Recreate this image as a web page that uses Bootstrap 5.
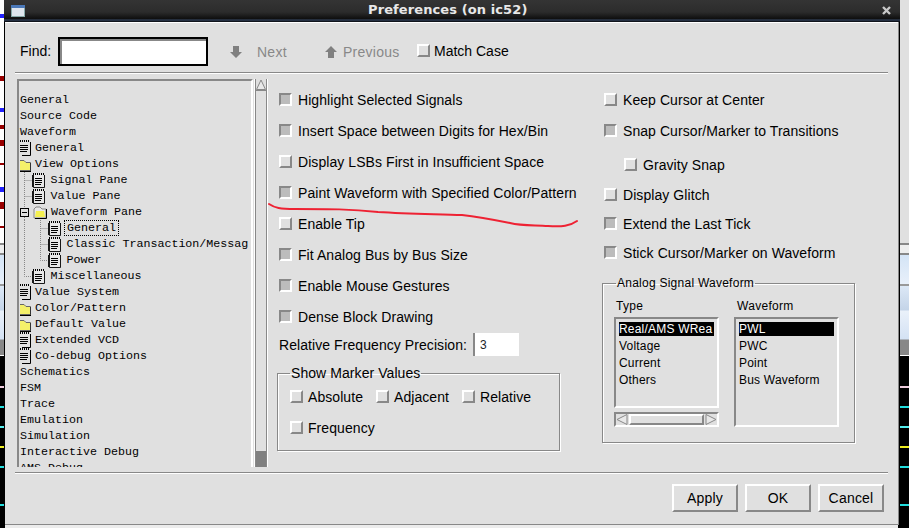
<!DOCTYPE html>
<html lang="en">
<head>
<meta charset="utf-8">
<title>Preferences (on ic52)</title>
<link href="https://cdn.jsdelivr.net/npm/bootstrap@5.3.0/dist/css/bootstrap.min.css" rel="stylesheet">
<style>
html,body{margin:0;height:528px;overflow:hidden;background:#000}
body{font-family:"Liberation Sans",Arial,sans-serif;font-size:14px;color:#000;line-height:16px}
.xdesk{width:909px;height:528px;position:relative}
.xstrip-l{width:4px;background:linear-gradient(180deg,#fff 0,#fff 14px,#22f 14px,#22f 18px,#fff 18px,#fff 76px,#900 76px,#900 81px,#fff 81px,#fff 108px,#22f 108px,#22f 112px,#fff 112px,#fff 125px,#900 125px,#900 129px,#fff 129px,#fff 140px,#900 140px,#900 146px,#fff 146px,#fff 163px,#900 163px,#900 165px,#fff 165px,#fff 187px,#22f 187px,#22f 192px,#fff 192px,#fff 202px,#900 202px,#900 209px,#fff 209px,#fff 226px,#900 226px,#900 228px,#fff 228px,#fff 243px,#888 243px,#888 245px,#eee 245px,#eee 253px,#888 253px,#888 255px,#d4e4f6 255px,#e8f0fa 284px,#999 284px,#999 286px,#dce8f6 286px,#c4d4e8 310px,#eaf1fa 311px,#d4e2f4 339px,#888 340px,#888 355px,#fff 355px,#fff 356px,#000 356px,#000 386px,#ecd 386px,#ecd 388px,#000 388px,#000 406px,#2dd 406px,#2dd 408px,#000 408px,#000 426px,#5ee 426px,#5ee 428px,#000 428px,#000 446px,#ee2 446px,#ee2 448px,#000 448px,#000 466px,#2dd 466px,#2dd 468px,#000 468px,#000 504px,#2dd 504px,#2dd 506px,#000 506px)}
.xstrip-r{width:9px;background:linear-gradient(180deg,#e0e0e0 0,#e0e0e0 243px,#888 243px,#888 245px,#eee 245px,#eee 253px,#888 253px,#888 255px,#d4e4f6 255px,#e8f0fa 284px,#999 284px,#999 286px,#dce8f6 286px,#c4d4e8 310px,#eaf1fa 311px,#d4e2f4 339px,#888 340px,#888 355px,#fff 355px,#fff 356px,#000 356px,#000 386px,#ecd 386px,#ecd 388px,#000 388px,#000 406px,#2dd 406px,#2dd 408px,#000 408px,#000 426px,#5ee 426px,#5ee 428px,#000 428px,#000 446px,#ee2 446px,#ee2 448px,#000 448px,#000 466px,#2dd 466px,#2dd 468px,#000 468px,#000 504px,#2dd 504px,#2dd 506px,#000 506px)}
.xwin{width:896px;height:528px;background:#000}
.xtitle{height:22px;background:linear-gradient(180deg,#343434 0,#2c2c2c 12px,#0e0e0e 19px,#3b4d6a 20px,#10141c 21px);color:#e8e8e8;padding-left:7px;padding-right:9px}
.xtitle-text{font-family:"DejaVu Sans",sans-serif;font-weight:700;font-size:13px;margin-left:343px;margin-top:-3px;letter-spacing:.1px}
.xclose{margin-left:auto;margin-top:-2px}
.xbody{width:894px;height:503px;margin-left:1px;background:#e0e0e0;border-right:1px solid #888;border-bottom:1px solid #888;box-shadow:inset 0 1px 0 #fff}
.xbelow{width:893px;height:3px;margin-left:1px;background:#ececec}
.xfind{height:44px;padding:15px 0 0 15px}
.xfind-label{width:38px;margin-top:-2px}
.xinput.form-control{width:150px;height:29px;border:2px solid #000;border-radius:0;background:#fff;box-shadow:inset 2px 2px 0 #888;padding:0 4px}
.xmuted{color:#888;letter-spacing:.25px}
.xnext{margin-left:22px;width:95px;gap:15px}
.xprev{width:92px;gap:6px}
.xmatch{gap:4px;margin-top:-2px}
.xck{appearance:none;-webkit-appearance:none;display:block;flex:none;width:13px;height:13px;margin:0;background:#e0e0e0;border:2px solid;border-color:#fff #888 #888 #fff}
.xck:checked{background:#bcbcbc;border-color:#888 #fff #fff #888}
.xrule{opacity:1;margin:0 0 0 10px;width:873px;border:0;height:2px;border-top:1px solid #888;border-bottom:1px solid #fff}
.xfind + .xrule{margin-top:6px}
.xmain{height:393px;margin-top:5px;padding-left:12px;padding-bottom:0}
.xtree{width:236px;height:388px;overflow:hidden;border:2px solid;border-color:#888 #fff #fff #888;border-bottom:0;padding-top:11px;padding-left:1px;font-family:"Liberation Mono","Courier New",monospace;font-size:11.67px;white-space:nowrap;background:#e0e0e0}
.xnode{height:16px;line-height:16px}
.xnode svg{flex:none;display:block}
.xfocus{outline:1px dotted #000;outline-offset:0;padding:0 2px;line-height:14px}
.xvbar{width:12px;height:388px;margin-left:2px;border-left:1px solid #888;border-right:1px solid #888;box-shadow:-1px 0 0 #fff,1px 0 0 #fff}
.xvthumb{height:16px;background:#808080}
.xcol1{width:325px;margin-left:10px;padding-top:5px;letter-spacing:.07px}
.xrow{height:31px;padding-left:2px;gap:6px}
.xprec{height:23px;margin-top:1px;padding-left:2px}
.xprec-in.form-control{width:46px;height:23px;margin-left:6px;border:0;border-left:2px solid #888;border-radius:0;background:#fff;padding:0 0 0 5px;font-size:12px;line-height:20px;box-shadow:none}
.xset{display:block;margin-top:9px;width:283px;height:86px;border:1px solid #888;box-shadow:1px 1px 0 #fff,inset 1px 1px 0 #fff;padding:0 0 0 12px}
.xset legend{float:none;width:auto;margin:0;padding:0 1px;font-size:14px;line-height:16px}
.xitem{width:86px;gap:5px;height:31px}
.xcol2{width:260px;padding-top:5px;letter-spacing:.07px}
.xrow2{height:31px;padding-left:2px;gap:6px}
.xrow2s{height:29px}
.xgrav{margin-top:3px;padding-left:22px}
.xset2{width:253px;height:168px;margin-top:8px;padding:0 0 0 11px;font-size:12px}
.xset2 legend{font-size:12px;margin-left:2px;letter-spacing:.25px}
.xhead{height:26px;padding-top:7px;padding-left:2px;letter-spacing:.3px}
.xhead2{padding-left:3px}
.xlistcol{width:105px;margin-right:15px}
.xlist{width:105px;height:91px;border:2px solid;border-color:#888 #fff #fff #888;padding:3px;overflow:hidden;font-size:12px;letter-spacing:.2px;white-space:nowrap}
.xlist2{height:110px}
.xlist li{height:14px;line-height:14px;margin-bottom:3px;overflow:hidden}
.xlist li.xsel{background:#000;color:#fff}
.xhbar{width:105px;height:15px;margin-top:4px;border:2px solid;border-color:#888 #fff #fff #888;overflow:hidden}
.xhthumb{flex:1;height:11px;margin:0 1px;border:2px solid;border-color:#fff #888 #888 #fff}
.xfoot{padding:10px 14px 0 0;gap:7px;width:893px}
.xbtn.btn{width:66px;height:28px;padding:0;border:2px solid;border-color:#fff #888 #888 #fff;border-radius:0;background:#e0e0e0;color:#000;font-size:14px;line-height:22px;letter-spacing:.2px}
.xink{position:absolute;left:0;top:0;pointer-events:none}
</style>
</head>
<body>
<svg width="0" height="0" class="position-absolute">
<defs>
<symbol id="doc" viewBox="0 0 13 15">
<path d="M1 1.5H12V14.5H1Z" fill="#e8e8e8"/>
<path d="M1 .5H12M1 1.5H12" stroke="#000" stroke-dasharray="1 1" fill="none"/>
<path d="M12.5 2V14.5H1.5V2M.5 2V14" stroke="#000" fill="none" stroke-width=".9"/>
<path d="M3 5.5H10M3 7.5H10M3 9.5H10M3 11.5H9" stroke="#000" fill="none"/>
</symbol>
<symbol id="doc0" viewBox="0 0 11 16">
<path d="M0 1.5H10M0 .5H9" stroke="#000" stroke-dasharray="1 1" fill="none"/>
<path d="M10.5 2V15.5H2" stroke="#000" fill="none"/>
<path d="M0 5.5H8M0 7.5H8M0 9.5H8M0 11.5H7" stroke="#000" fill="none"/>
</symbol>
<symbol id="fold" viewBox="0 0 11 15">
<path d="M0 3.5H4L6 5.5H10.5V13.5H0" fill="#f4f06a" stroke="#666"/>
<path d="M11 6V14.5H0" stroke="#000" fill="none"/>
</symbol>
<symbol id="foldo" viewBox="0 0 15 13">
<path d="M2 3L4 1H8L10 3H14V12H2Z" fill="#e8e8e8" stroke="#888"/>
<path d="M4 5H12L13 11H3Z" fill="#f4f050"/>
<path d="M14.5 3V12.5H3" stroke="#000" fill="none"/>
</symbol>
<symbol id="con1" viewBox="0 0 12 16"><path d="M4.5 0V16M4.5 8.5H12" stroke="#888" stroke-dasharray="1 1" fill="none"/></symbol>
<symbol id="con1e" viewBox="0 0 12 16"><path d="M4.5 0V8.5H12" stroke="#888" stroke-dasharray="1 1" fill="none"/></symbol>
</defs>
</svg>
<div class="xdesk d-flex">
<div class="xstrip-l"></div>
<div class="xwin d-flex flex-column">
<div class="xtitle d-flex align-items-center">
<svg width="14" height="12" viewBox="0 0 14 12"><rect x=".5" y=".5" width="13" height="11" fill="#dfe6ee" stroke="#8aa"/><rect x="0" y="0" width="14" height="3" fill="#4a78b8"/></svg>
<span class="xtitle-text">Preferences (on ic52)</span>
<svg class="xclose" width="9" height="9" viewBox="0 0 9 9"><path d="M1 1L8 8M8 1L1 8" stroke="#c8c8c8" stroke-width="2.4"/></svg>
</div>
<div class="xbody">
<div class="xfind d-flex align-items-center">
<label class="xfind-label" for="findbox">Find:</label>
<input id="findbox" class="xinput form-control" type="text">
<span class="xnext xmuted d-flex align-items-center">
<svg width="12" height="12" viewBox="0 0 12 12"><path d="M3 0H9V6H12L6 12L0 6H3Z" fill="#808080"/></svg>Next</span>
<span class="xprev xmuted d-flex align-items-center">
<svg width="12" height="12" viewBox="0 0 12 12"><path d="M6 0L12 6H9V12H3V6H0Z" fill="#808080"/></svg>Previous</span>
<span class="xmatch d-flex align-items-center"><input class="xck" type="checkbox" aria-label="Match Case">Match Case</span>
</div>
<hr class="xrule">
<div class="xmain d-flex">
<div class="xtree">
<div class="xnode">General</div>
<div class="xnode">Source Code</div>
<div class="xnode">Waveform</div>
<div class="xnode d-flex align-items-center gap-1"><svg width="11" height="16"><use href="#doc0"/></svg>General</div>
<div class="xnode d-flex align-items-center gap-1"><svg width="11" height="15"><use href="#fold"/></svg>View Options</div>
<div class="xnode d-flex align-items-center"><svg width="12" height="16"><use href="#con1"/></svg><svg width="13" height="15" class="me-1"><use href="#doc"/></svg>&#8202;&#8202;Signal Pane</div>
<div class="xnode d-flex align-items-center"><svg width="12" height="16"><use href="#con1"/></svg><svg width="13" height="15" class="me-1"><use href="#doc"/></svg>&#8202;&#8202;Value Pane</div>
<div class="xnode d-flex align-items-center"><svg width="12" height="16" viewBox="0 0 12 16"><path d="M4.5 0V4M4.5 13V16" stroke="#888" stroke-dasharray="1 1"/><rect x=".5" y="4.5" width="8" height="8" fill="#e0e0e0" stroke="#000"/><path d="M2 8.5H7" stroke="#000"/></svg><svg width="15" height="13"><use href="#foldo"/></svg><span class="ms-1">Waveform Pane</span></div>
<div class="xnode d-flex align-items-center"><svg width="12" height="16"><path d="M4.5 0V16" stroke="#888" stroke-dasharray="1 1"/></svg><svg width="16" height="16"><use href="#con1" width="12" height="16" x="4"/></svg><svg width="13" height="15"><use href="#doc"/></svg><span class="xfocus ms-1">General</span></div>
<div class="xnode d-flex align-items-center"><svg width="12" height="16"><path d="M4.5 0V16" stroke="#888" stroke-dasharray="1 1"/></svg><svg width="16" height="16"><use href="#con1" width="12" height="16" x="4"/></svg><svg width="13" height="15"><use href="#doc"/></svg><span class="ms-1">&#8202;&#8202;Classic Transaction/Messag</span></div>
<div class="xnode d-flex align-items-center"><svg width="12" height="16"><path d="M4.5 0V16" stroke="#888" stroke-dasharray="1 1"/></svg><svg width="16" height="16"><use href="#con1e" width="12" height="16" x="4"/></svg><svg width="13" height="15"><use href="#doc"/></svg><span class="ms-1">&#8202;&#8202;Power</span></div>
<div class="xnode d-flex align-items-center"><svg width="12" height="16"><use href="#con1e"/></svg><svg width="13" height="15" class="me-1"><use href="#doc"/></svg>&#8202;&#8202;Miscellaneous</div>
<div class="xnode d-flex align-items-center gap-1"><svg width="11" height="16"><use href="#doc0"/></svg>Value System</div>
<div class="xnode d-flex align-items-center gap-1"><svg width="11" height="15"><use href="#fold"/></svg>Color/Pattern</div>
<div class="xnode d-flex align-items-center gap-1"><svg width="11" height="15"><use href="#fold"/></svg>Default Value</div>
<div class="xnode d-flex align-items-center gap-1"><svg width="11" height="16"><use href="#doc0"/></svg>Extended VCD</div>
<div class="xnode d-flex align-items-center gap-1"><svg width="11" height="16"><use href="#doc0"/></svg>Co-debug Options</div>
<div class="xnode">Schematics</div>
<div class="xnode">FSM</div>
<div class="xnode">Trace</div>
<div class="xnode">Emulation</div>
<div class="xnode">Simulation</div>
<div class="xnode">Interactive Debug</div>
<div class="xnode">AMS Debug</div>
</div>
<div class="xvbar d-flex flex-column justify-content-between">
<svg width="10" height="12" viewBox="0 0 10 12"><path d="M5 1L9.5 10.5H.5Z" fill="#e8e8e8" stroke="#888"/><path d="M0 11.5H10" stroke="#888"/></svg>
<div class="xvthumb"></div>
</div>
<div class="xcol1">
<div class="xrow d-flex align-items-center"><input class="xck" type="checkbox" checked aria-label="Highlight Selected Signals">Highlight Selected Signals</div>
<div class="xrow d-flex align-items-center"><input class="xck" type="checkbox" checked aria-label="Insert Space">Insert Space between Digits for Hex/Bin</div>
<div class="xrow d-flex align-items-center"><input class="xck" type="checkbox" aria-label="Display LSBs">Display LSBs First in Insufficient Space</div>
<div class="xrow d-flex align-items-center"><input class="xck" type="checkbox" checked aria-label="Paint Waveform">Paint Waveform with Specified Color/Pattern</div>
<div class="xrow d-flex align-items-center"><input class="xck" type="checkbox" aria-label="Enable Tip">Enable Tip</div>
<div class="xrow d-flex align-items-center"><input class="xck" type="checkbox" checked aria-label="Fit Analog Bus">Fit Analog Bus by Bus Size</div>
<div class="xrow d-flex align-items-center"><input class="xck" type="checkbox" checked aria-label="Enable Mouse Gestures">Enable Mouse Gestures</div>
<div class="xrow d-flex align-items-center"><input class="xck" type="checkbox" checked aria-label="Dense Block Drawing">Dense Block Drawing</div>
<div class="xprec d-flex align-items-center">Relative Frequency Precision:<input class="xprec-in form-control" type="text" value="3" aria-label="Precision"></div>
<fieldset class="xset">
<legend>Show Marker Values</legend>
<div class="d-flex">
<div class="xitem d-flex align-items-center"><input class="xck" type="checkbox" aria-label="Absolute">Absolute</div>
<div class="xitem d-flex align-items-center"><input class="xck" type="checkbox" aria-label="Adjacent">Adjacent</div>
<div class="xitem d-flex align-items-center"><input class="xck" type="checkbox" aria-label="Relative">Relative</div>
</div>
<div class="xitem d-flex align-items-center"><input class="xck" type="checkbox" aria-label="Frequency">Frequency</div>
</fieldset>
</div>
<div class="xcol2">
<div class="xrow2 d-flex align-items-center"><input class="xck" type="checkbox" aria-label="Keep Cursor at Center">Keep Cursor at Center</div>
<div class="xrow2 d-flex align-items-center"><input class="xck" type="checkbox" checked aria-label="Snap Cursor">Snap Cursor/Marker to Transitions</div>
<div class="xrow2 xgrav d-flex align-items-center"><input class="xck" type="checkbox" aria-label="Gravity Snap">Gravity Snap</div>
<div class="xrow2 xrow2s d-flex align-items-center"><input class="xck" type="checkbox" aria-label="Display Glitch">Display Glitch</div>
<div class="xrow2 xrow2s d-flex align-items-center"><input class="xck" type="checkbox" checked aria-label="Extend the Last Tick">Extend the Last Tick</div>
<div class="xrow2 xrow2s d-flex align-items-center"><input class="xck" type="checkbox" checked aria-label="Stick Cursor">Stick Cursor/Marker on Waveform</div>
<fieldset class="xset xset2">
<legend>Analog Signal Waveform</legend>
<div class="d-flex">
<div class="xlistcol">
<div class="xhead">Type</div>
<ul class="xlist list-unstyled mb-0"><li class="xsel">Real/AMS WRea</li><li>Voltage</li><li>Current</li><li>Others</li></ul>
<div class="xhbar d-flex align-items-center">
<svg width="12" height="11" viewBox="0 0 12 11"><path d="M1 5.5L11 .5V10.5Z" fill="#e8e8e8" stroke="#888"/></svg>
<div class="xhthumb"></div>
<svg width="12" height="11" viewBox="0 0 12 11"><path d="M11 5.5L1 .5V10.5Z" fill="#e8e8e8" stroke="#888"/></svg>
</div>
</div>
<div class="xlistcol">
<div class="xhead xhead2">Waveform</div>
<ul class="xlist xlist2 list-unstyled mb-0"><li class="xsel">PWL</li><li>PWC</li><li>Point</li><li>Bus Waveform</li></ul>
</div>
</div>
</fieldset>
</div>
</div>
<hr class="xrule">
<div class="xfoot d-flex justify-content-end">
<button class="xbtn btn" type="button">Apply</button>
<button class="xbtn btn" type="button">OK</button>
<button class="xbtn btn" type="button">Cancel</button>
</div>
</div>
<div class="xbelow"></div>
</div>
<div class="xstrip-r"></div>
<svg class="xink" width="909" height="528" viewBox="0 0 909 528"><path d="M269 204C275 208 280 209 295 209C330 209 350 209 378 212C410 214 440 214 462 215C480 217 495 220 510 223C522 226 535 225 548 226C562 227 570 226 577 221" fill="none" stroke="#ee2233" stroke-width="2" stroke-linecap="round"/></svg>
</div>
<script src="https://cdn.jsdelivr.net/npm/bootstrap@5.3.0/dist/js/bootstrap.bundle.min.js"></script>
</body>
</html>
